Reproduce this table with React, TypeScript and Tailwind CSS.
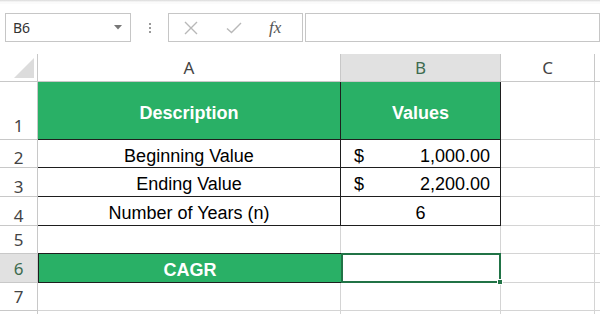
const cellFont = { fontFamily: '"Liberation Sans", Arial, sans-serif' };
const uiFont = { fontFamily: '"Noto Sans", "Open Sans", sans-serif' };

const RowHead = ({ n, active }: { n: string; active?: boolean }) => (
  <div
    className={`w-[38px] shrink-0 h-full flex items-end justify-center pb-[1px] border-r border-b border-[#c8c8c8] text-[17px] ${
      active ? "bg-[#e1e1e1] text-[#3d6b4f]" : "bg-white text-[#444]"
    }`}
    style={uiFont}
  >
    {n}
  </div>
);

const Tail = () => (
  <>
    <div className="w-[94px] shrink-0 h-full border-r border-b border-[#d4d4d4]" />
    <div className="flex-1 h-full border-b border-[#d4d4d4]" />
  </>
);

const EmptyRow = ({ n, h }: { n: string; h: string }) => (
  <div className={`flex ${h}`}>
    <RowHead n={n} />
    <div className="w-[303px] shrink-0 h-full border-r border-b border-[#d4d4d4]" />
    <div className="w-[160px] shrink-0 h-full border-r border-b border-[#d4d4d4]" />
    <Tail />
  </div>
);

const data = [
  { n: "2", h: "h-[28px]", pb: "pb-[2px]", label: "Beginning Value", val: "1,000.00", dollar: true },
  { n: "3", h: "h-[29px]", pb: "pb-[3px]", label: "Ending Value", val: "2,200.00", dollar: true },
  { n: "4", h: "h-[29px]", pb: "pb-[3px]", label: "Number of Years (n)", val: "6", dollar: false },
];

export default function App() {
  return (
    <div className="w-[600px] h-[314px] bg-white overflow-hidden">
      {/* formula bar */}
      <div className="h-[54px] bg-gradient-to-b from-[#d9d9d9] via-[#fbfbfb] to-[#fbfbfb] bg-[length:100%_4px] bg-no-repeat flex items-start pt-[13px]">
        <div className="ml-[5px] w-[126px] h-[29px] border border-[#c6c6c6] bg-white flex items-center justify-between pl-[7px] pr-[8px]">
          <span className="text-[14px] text-[#333]" style={uiFont}>B6</span>
          <svg width="8" height="5" viewBox="0 0 8 5"><path d="M0 0h8L4 4.5z" fill="#777" /></svg>
        </div>
        <div className="w-[37px] h-[29px] flex flex-col items-center justify-center gap-[2px]">
          <span className="w-[2px] h-[2px] bg-[#999]" />
          <span className="w-[2px] h-[2px] bg-[#999]" />
          <span className="w-[2px] h-[2px] bg-[#999]" />
        </div>
        <div className="w-[135px] h-[29px] border border-[#c6c6c6] bg-white flex items-center pl-[14px]">
          <svg width="14" height="14" viewBox="0 0 14 14" className="ml-[1px]">
            <path d="M1 1L13 13M13 1L1 13" stroke="#b8b8b8" strokeWidth="1.4" />
          </svg>
          <svg width="16" height="12" viewBox="0 0 16 12" className="ml-[28px]">
            <path d="M1 6.5L5.5 10.5L15 1" stroke="#b8b8b8" strokeWidth="1.4" fill="none" />
          </svg>
          <span className="ml-[27px] text-[17px] italic text-[#555]" style={{ fontFamily: '"Liberation Serif", serif' }}>fx</span>
        </div>
        <div className="ml-[2px] flex-1 h-[29px] border border-[#c6c6c6] bg-white" />
      </div>

      {/* column headers */}
      <div className="flex h-[28px] text-[17px] text-[#444]" style={uiFont}>
        <div className="w-[38px] shrink-0 h-full border-r border-b border-[#c8c8c8] relative bg-white">
          <svg className="absolute right-[3px] bottom-[3px]" width="20" height="20" viewBox="0 0 20 20"><path d="M20 0V20H0z" fill="#dcdcdc" /></svg>
        </div>
        <div className="w-[303px] shrink-0 h-full flex items-center justify-center border-r border-b border-[#c8c8c8]">A</div>
        <div className="w-[160px] shrink-0 h-full flex items-center justify-center border-r border-b border-[#c8c8c8] bg-[#e1e1e1] text-[#3d6b4f]">B</div>
        <div className="w-[94px] shrink-0 h-full flex items-center justify-center border-r border-b border-[#c8c8c8]">C</div>
        <div className="flex-1 h-full border-b border-[#c8c8c8]" />
      </div>

      {/* row 1 */}
      <div className="flex h-[58px]">
        <RowHead n="1" />
        <div className="w-[303px] shrink-0 h-full bg-[#29b066] border-r border-b border-[#1e1e1e] flex items-center justify-center pt-[4px] leading-none font-bold text-white text-[18px]" style={cellFont}>
          Description
        </div>
        <div className="w-[160px] shrink-0 h-full bg-[#29b066] border-r border-b border-[#1e1e1e] flex items-center justify-center pt-[4px] leading-none font-bold text-white text-[18px]" style={cellFont}>
          Values
        </div>
        <Tail />
      </div>

      {data.map((d) => (
        <div key={d.n} className={`flex ${d.h} text-[18px] leading-none text-black`} style={cellFont}>
          <RowHead n={d.n} />
          <div className={`w-[303px] shrink-0 h-full border-r border-b border-[#1e1e1e] flex items-end justify-center ${d.pb}`}>{d.label}</div>
          {d.dollar ? (
            <div className={`w-[160px] shrink-0 h-full border-r border-b border-[#1e1e1e] flex items-end justify-between pl-[13px] pr-[10px] ${d.pb}`}>
              <span>$</span>
              <span>{d.val}</span>
            </div>
          ) : (
            <div className={`w-[160px] shrink-0 h-full border-r border-b border-[#1e1e1e] flex items-end justify-center ${d.pb}`}>{d.val}</div>
          )}
          <Tail />
        </div>
      ))}

      <EmptyRow n="5" h="h-[28px]" />

      {/* row 6 */}
      <div className="flex h-[29px]">
        <RowHead n="6" active />
        <div className="w-[303px] shrink-0 h-[30px] -mt-[1px] bg-[#29b066] border-l border-t border-b border-[#1e1e1e] flex items-center justify-center pt-[3px] leading-none font-bold text-white text-[18px]" style={cellFont}>
          CAGR
        </div>
        <div className="w-[160px] shrink-0 h-[30px] -mt-[1px] border-2 border-[#217346] bg-white relative">
          <span className="absolute -right-[4px] -bottom-[4px] w-[6px] h-[6px] bg-[#217346] border border-white" />
        </div>
        <Tail />
      </div>

      <EmptyRow n="7" h="h-[28px]" />
      <EmptyRow n="" h="h-[28px]" />
    </div>
  );
}
